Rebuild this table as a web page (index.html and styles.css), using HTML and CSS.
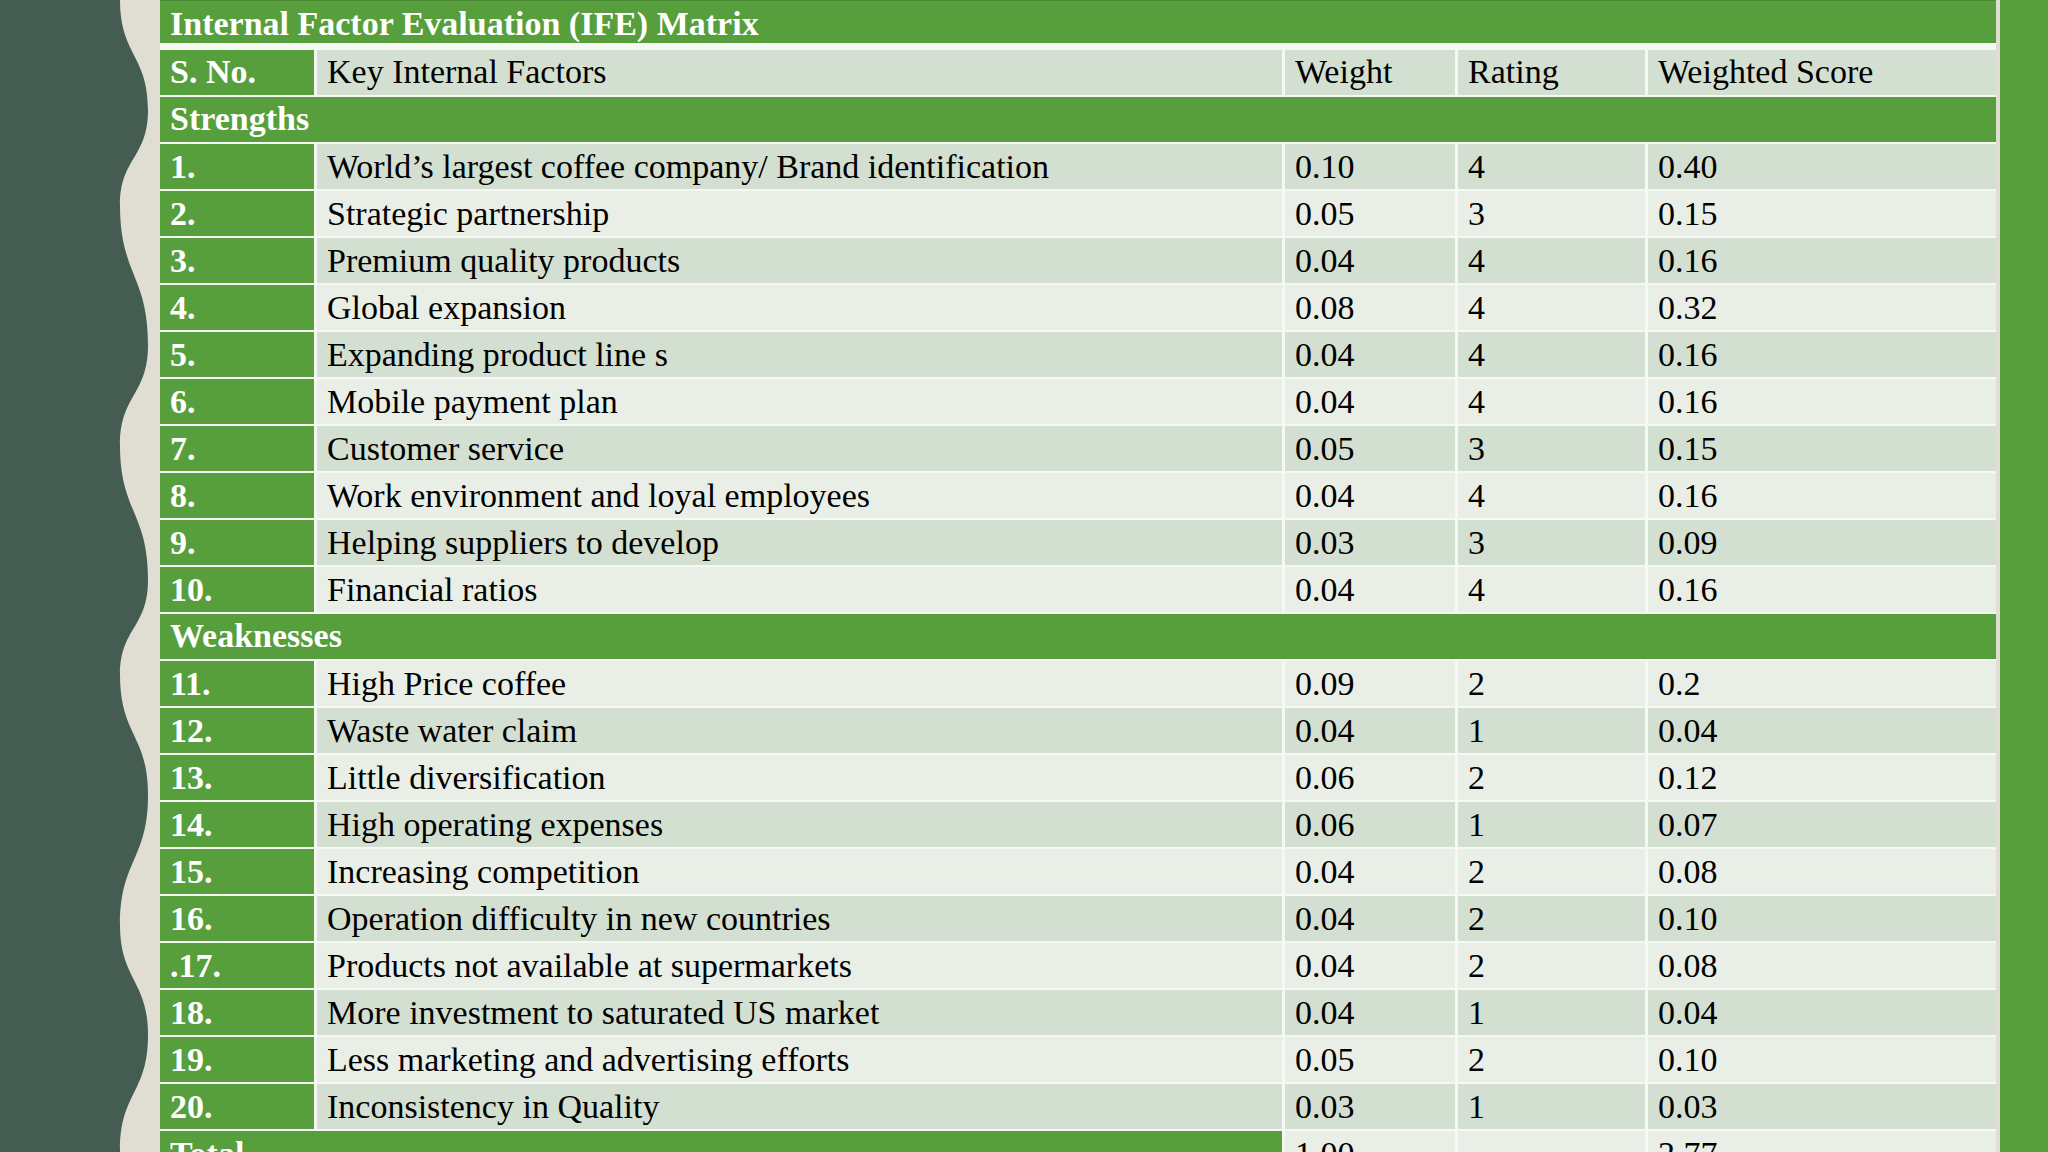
FILE: index.html
```html
<!DOCTYPE html>
<html lang="en">
<head>
<meta charset="utf-8">
<title>Internal Factor Evaluation (IFE) Matrix</title>
<link rel="stylesheet" href="styles.css">
</head>
<body>
<div class="slide">
  <div class="wave">
    <svg width="160" height="1152" viewBox="0 0 160 1152" aria-hidden="true">
      <path class="wave-fill" d="M0 0 L120 0 C120 55 148 55 148 110 C148 158 120 158 120 205 C120 275 148 275 148 345 C148 395 120 395 120 445 C120 512 148 512 148 580 C148 628 120 628 120 675 C120 735 148 735 148 795 C148 860 120 860 120 925 C120 980 148 980 148 1035 C148 1093 120 1093 120 1150 L120 1152 L0 1152 Z"/>
    </svg>
  </div>
  <div class="table-wrap">
    <table class="ife">
      <colgroup>
        <col class="c-no"><col class="c-factor"><col class="c-weight"><col class="c-rating"><col class="c-score">
      </colgroup>
      <tbody>
        <tr class="title"><td colspan="5">Internal Factor Evaluation (IFE) Matrix</td></tr>
        <tr class="dark head"><td class="num">S. No.</td><td>Key Internal Factors</td><td>Weight</td><td>Rating</td><td>Weighted Score</td></tr>
        <tr class="section"><td colspan="5">Strengths</td></tr>
        <tr class="dark"><td class="num">1.</td><td>World’s largest coffee company/ Brand identification</td><td>0.10</td><td>4</td><td>0.40</td></tr>
        <tr class="light"><td class="num">2.</td><td>Strategic partnership</td><td>0.05</td><td>3</td><td>0.15</td></tr>
        <tr class="dark"><td class="num">3.</td><td>Premium quality products</td><td>0.04</td><td>4</td><td>0.16</td></tr>
        <tr class="light"><td class="num">4.</td><td>Global expansion</td><td>0.08</td><td>4</td><td>0.32</td></tr>
        <tr class="dark"><td class="num">5.</td><td>Expanding product line s</td><td>0.04</td><td>4</td><td>0.16</td></tr>
        <tr class="light"><td class="num">6.</td><td>Mobile payment plan</td><td>0.04</td><td>4</td><td>0.16</td></tr>
        <tr class="dark"><td class="num">7.</td><td>Customer service</td><td>0.05</td><td>3</td><td>0.15</td></tr>
        <tr class="light"><td class="num">8.</td><td>Work environment and loyal employees</td><td>0.04</td><td>4</td><td>0.16</td></tr>
        <tr class="dark"><td class="num">9.</td><td>Helping suppliers to develop</td><td>0.03</td><td>3</td><td>0.09</td></tr>
        <tr class="light"><td class="num">10.</td><td>Financial ratios</td><td>0.04</td><td>4</td><td>0.16</td></tr>
        <tr class="section"><td colspan="5">Weaknesses</td></tr>
        <tr class="light"><td class="num">11.</td><td>High Price coffee</td><td>0.09</td><td>2</td><td>0.2</td></tr>
        <tr class="dark"><td class="num">12.</td><td>Waste water claim</td><td>0.04</td><td>1</td><td>0.04</td></tr>
        <tr class="light"><td class="num">13.</td><td>Little diversification</td><td>0.06</td><td>2</td><td>0.12</td></tr>
        <tr class="dark"><td class="num">14.</td><td>High operating expenses</td><td>0.06</td><td>1</td><td>0.07</td></tr>
        <tr class="light"><td class="num">15.</td><td>Increasing competition</td><td>0.04</td><td>2</td><td>0.08</td></tr>
        <tr class="dark"><td class="num">16.</td><td>Operation difficulty in new countries</td><td>0.04</td><td>2</td><td>0.10</td></tr>
        <tr class="light"><td class="num">.17.</td><td>Products not available at supermarkets</td><td>0.04</td><td>2</td><td>0.08</td></tr>
        <tr class="dark"><td class="num">18.</td><td>More investment to saturated US market</td><td>0.04</td><td>1</td><td>0.04</td></tr>
        <tr class="light"><td class="num">19.</td><td>Less marketing and advertising efforts</td><td>0.05</td><td>2</td><td>0.10</td></tr>
        <tr class="dark"><td class="num">20.</td><td>Inconsistency in Quality</td><td>0.03</td><td>1</td><td>0.03</td></tr>
        <tr class="light total"><td class="num" colspan="2">Total</td><td>1.00</td><td></td><td>2.77</td></tr>
      </tbody>
    </table>
  </div>
  <div class="bar"></div>
</div>
</body>
</html>
```

FILE: styles.css
```css
html, body {
  margin: 0;
  padding: 0;
}

body {
  width: 2048px;
  height: 1152px;
  overflow: hidden;
  background: #e0ddd3;
  font-family: "Liberation Serif", "Times New Roman", serif;
}

.slide {
  display: flex;
  width: 2048px;
  height: 1152px;
  overflow: hidden;
  background: #e0ddd3;
}

.wave {
  flex: none;
  width: 160px;
  height: 1152px;
}

.wave svg {
  display: block;
}

.wave-fill {
  fill: #445c51;
}

.table-wrap {
  flex: none;
  width: 1836px;
  margin-right: 4px;
}

.bar {
  flex: none;
  width: 48px;
  height: 1152px;
  background: #579e3c;
}

.ife {
  width: 1836px;
  table-layout: fixed;
  border-collapse: separate;
  border-spacing: 0;
  font-size: 34px;
  color: #000;
}

.c-no { width: 157px; }
.c-factor { width: 968px; }
.c-weight { width: 173px; }
.c-rating { width: 190px; }
.c-score { width: 348px; }

.ife td {
  height: 45px;
  padding: 0 8px 0 10px;
  line-height: 45px;
  vertical-align: top;
  white-space: nowrap;
  overflow: hidden;
  border-bottom: 2px solid #f5f8f3;
  border-right: 3px solid #f5f8f3;
}

.ife td:last-child {
  border-right: 0;
}

.ife tr.title td {
  height: 39px;
  padding-top: 3px;
  line-height: 39px;
  border-top: 1px solid #4a8a34;
  border-bottom: 7px solid #f5f8f3;
  background: #579e3c;
  color: #fff;
  font-weight: bold;
}

.ife tr.dark td {
  background: #d3dfd0;
}

.ife tr.light td {
  background: #e9efe7;
}

.ife tr.head td {
  line-height: 43px;
}

.ife tr.section td {
  background: #579e3c;
  color: #fff;
  font-weight: bold;
  line-height: 43px;
}

.ife tr td.num {
  background: #579e3c;
  color: #fff;
  font-weight: bold;
}
```
